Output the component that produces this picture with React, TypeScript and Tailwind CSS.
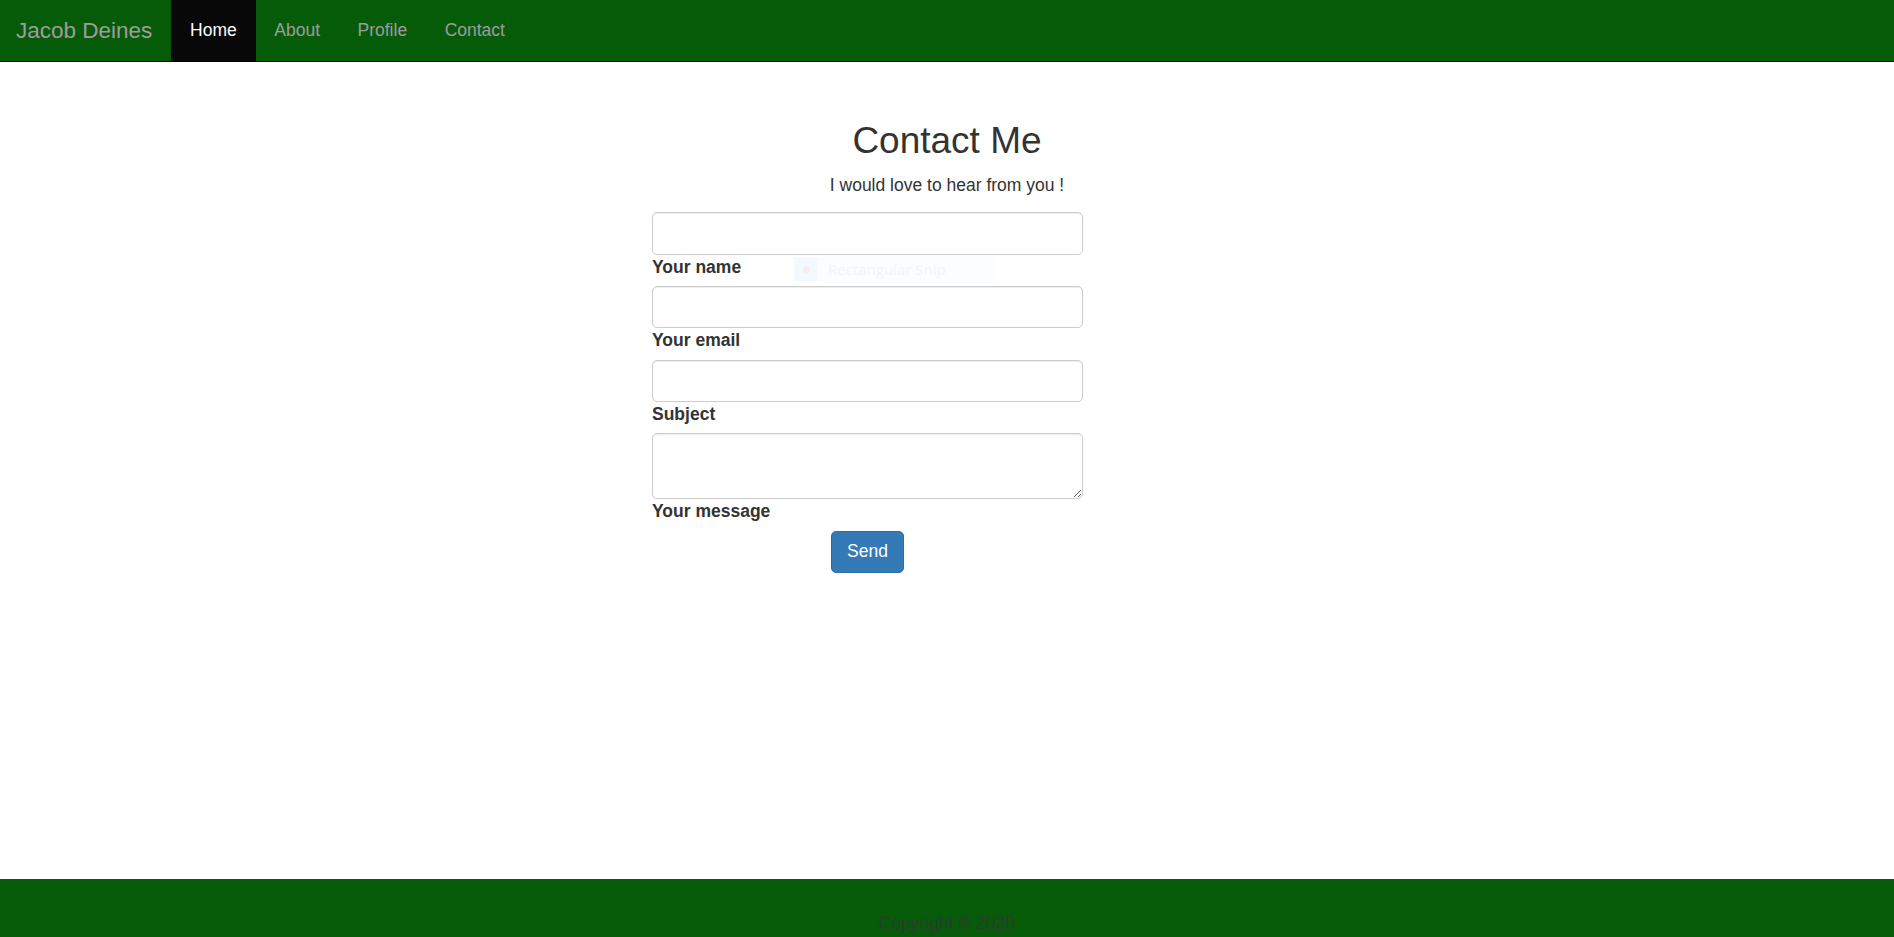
import React from "react";

const font = { fontFamily: '"Liberation Sans", Arial, Helvetica, sans-serif' };

function NavBar() {
  const links = ["About", "Profile", "Contact"];
  return (
    <nav className="flex h-[62px] items-stretch border-b border-black bg-[#065b08]">
      <a className="flex items-center pl-[16px] pr-[19px] text-[22.5px] text-[#9d9d9d]">Jacob Deines</a>
      <ul className="flex items-stretch">
        <li className="flex items-center bg-[#080808] px-[18.75px] text-[17.5px] text-white">Home</li>
        {links.map((l) => (
          <li key={l} className="flex items-center px-[18.75px] text-[17.5px] text-[#9d9d9d]">
            {l}
          </li>
        ))}
      </ul>
    </nav>
  );
}

function Field({ label, area }: { label: string; area?: boolean }) {
  const box =
    "block w-full rounded-[5px] border border-[#cccccc] bg-white shadow-[inset_0_1px_1px_rgba(0,0,0,0.075)]";
  return (
    <div>
      {area ? (
        <textarea className={box + " h-[66px]"} />
      ) : (
        <input className={box + " h-[42.5px]"} />
      )}
      <label className="mb-[6.25px] block text-[17.5px] font-bold leading-[25px] text-[#333333]">{label}</label>
    </div>
  );
}

export default function App() {
  return (
    <div className="flex min-h-screen flex-col bg-white" style={font}>
      <NavBar />
      <main className="relative flex-1">
        <h2 className="mt-[58px] text-center text-[37px] leading-[41px] text-[#333333]">Contact Me</h2>
        <p className="mt-[12px] text-center text-[17.5px] leading-[25px] text-[#333333]">
          I would love to hear from you !
        </p>
        <form className="ml-[652px] mt-[14px] w-[431px]">
          <Field label="Your name" />
          <Field label="Your email" />
          <Field label="Subject" />
          <Field label="Your message" area />
          <div className="mt-[2px] flex justify-center">
            <button
              type="button"
              className="h-[42px] w-[73px] rounded-[5px] border border-[#2e6da4] bg-[#337ab7] text-[17.5px] text-white"
            >
              Send
            </button>
          </div>
        </form>
        <div className="pointer-events-none absolute left-[794px] top-[195px] flex h-[24px] w-[202px] items-center bg-[#fafcff]/80">
          <span className="flex h-full w-[24px] items-center justify-center bg-[#f4f8ff]">
            <span className="h-[7px] w-[7px] rounded-full bg-[#f6eeee]" />
          </span>
          <span className="ml-[10px] text-[15px] text-[#f3f4f6]" style={{ fontFamily: '"Open Sans", "Noto Sans", sans-serif' }}>
            Rectangular Snip
          </span>
        </div>
      </main>
      <footer className="h-[58px] flex-none bg-[#065b08] pt-[32px] text-center text-[17.5px] leading-[25px] text-[#2f3a2f]">
        Copyright © 2020
      </footer>
    </div>
  );
}
